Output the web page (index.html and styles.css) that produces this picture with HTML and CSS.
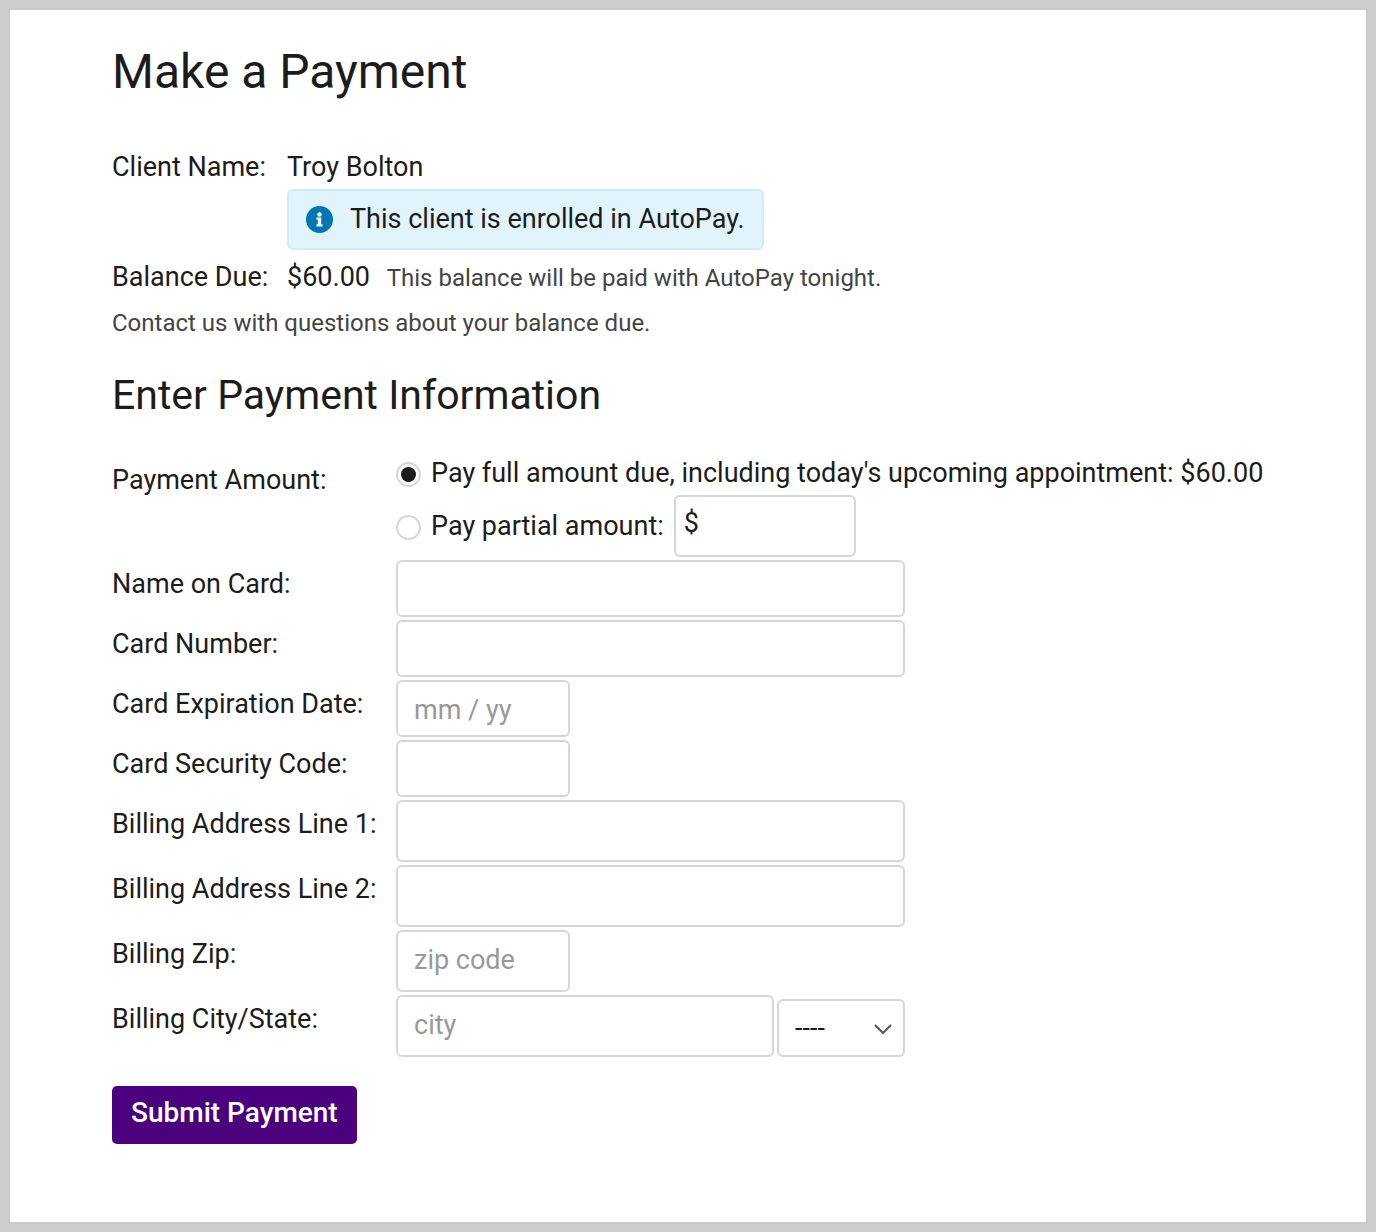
FILE: index.html
```
<!DOCTYPE html>
<html lang="en">
<head>
    <meta charset="utf-8">
    <title>Make a Payment</title>
    <link rel="stylesheet" href="styles.css">
</head>
<body>
    <main id="container">
        <h1>Make a Payment</h1>

        <dl class="summary">
            <dt>Client Name:</dt>
            <dd>
                Troy Bolton
                <div class="alert">
                    <svg class="info-icon" viewBox="0 0 27 27" aria-hidden="true">
                        <circle cx="13.500" cy="13.500" r="13.500" fill="#0077b3"/>
                        <circle cx="13.500" cy="8.500" r="2.200" fill="#fff"/>
                        <path d="M10.500 11.500h4.700v6.700h1.300v2.300h-6v-2.300h1.300v-4.400h-1.300z" fill="#fff"/>
                    </svg>
                    <span>This client is enrolled in AutoPay.</span>
                </div>
            </dd>
            <dt class="balance">Balance Due:</dt>
            <dd class="balance">$60.00 <span class="note">This balance will be paid with AutoPay tonight.</span></dd>
        </dl>
        <p class="contact">Contact us with questions about your balance due.</p>

        <h2>Enter Payment Information</h2>

        <form id="payment-form">
            <div class="row amount">
                <span class="label" id="amount-label">Payment Amount:</span>
                <div class="options" role="radiogroup" aria-labelledby="amount-label">
                    <div class="option">
                        <input type="radio" name="amount" id="pay-full" checked>
                        <label for="pay-full">Pay full amount due, including today's upcoming appointment: $60.00</label>
                    </div>
                    <div class="option partial">
                        <input type="radio" name="amount" id="pay-partial">
                        <label for="pay-partial">Pay partial amount:</label>
                        <div class="money">
                            <span>$</span>
                            <input type="text" id="partial-amount" aria-label="Partial amount">
                        </div>
                    </div>
                </div>
            </div>
            <div class="row">
                <label for="card-name">Name on Card:</label>
                <input type="text" class="field" id="card-name">
            </div>
            <div class="row">
                <label for="card-number">Card Number:</label>
                <input type="text" class="field" id="card-number">
            </div>
            <div class="row">
                <label for="card-exp">Card Expiration Date:</label>
                <input type="text" class="field short" id="card-exp" placeholder="mm / yy">
            </div>
            <div class="row">
                <label for="card-code">Card Security Code:</label>
                <input type="text" class="field short" id="card-code">
            </div>
            <div class="row billing">
                <label for="address1">Billing Address Line 1:</label>
                <input type="text" class="field" id="address1">
            </div>
            <div class="row billing">
                <label for="address2">Billing Address Line 2:</label>
                <input type="text" class="field" id="address2">
            </div>
            <div class="row billing">
                <label for="zip">Billing Zip:</label>
                <input type="text" class="field short" id="zip" placeholder="zip code">
            </div>
            <div class="row billing">
                <label for="city">Billing City/State:</label>
                <div class="city-state">
                    <input type="text" class="field" id="city" placeholder="city">
                    <div class="select">
                        <select id="state" aria-label="State">
                            <option>----</option>
                        </select>
                        <svg class="chevron" viewBox="0 0 18 10" aria-hidden="true">
                            <path d="M1 1l8 8 8-8" fill="none" stroke="#555" stroke-width="2"/>
                        </svg>
                    </div>
                </div>
            </div>
            <button type="submit">Submit Payment</button>
        </form>
    </main>
</body>
</html>
```

FILE: styles.css
```
* {
    box-sizing: border-box;
}
body {
    margin: 0;
    min-height: 100vh;
    border: 10px solid #ccc;
    background-color: #fff;
    color: #1c1c1c;
    font-family: Roboto, "Liberation Sans", sans-serif;
    font-size: 27px;
    line-height: 48px;
}
#container {
    padding: 34px 80px 70px 102px;
}
h1 {
    margin: 0 0 45px;
    font-size: 48px;
    font-weight: 400;
    line-height: 56px;
}
h2 {
    margin: 30px 0 31px;
    font-size: 41px;
    font-weight: 400;
    line-height: 50px;
}
.summary {
    display: grid;
    grid-template-columns: 175px 1fr;
    margin: 0;
    line-height: 44px;
}
.summary dd {
    margin: 0;
}
.summary .balance {
    line-height: 55px;
}
.alert {
    display: flex;
    align-items: center;
    gap: 17px;
    width: fit-content;
    padding: 6px 17px;
    border: 2px solid #cdeef9;
    border-radius: 6px;
    background-color: #e1f4fc;
    line-height: 45px;
}
.info-icon {
    width: 27px;
    height: 27px;
}
.note {
    margin-left: 10px;
    color: #444;
    font-size: 24px;
}
.contact {
    margin: 0;
    color: #444;
    font-size: 24px;
    line-height: 34px;
}
input,
select,
button {
    margin: 0;
    color: inherit;
    font: inherit;
}
.row {
    display: grid;
    grid-template-columns: 284px 1fr;
    align-items: start;
    margin-bottom: 3px;
}
.amount .label {
    padding-top: 5px;
}
.option {
    display: flex;
    align-items: center;
    gap: 10px;
    line-height: 44px;
}
.option input[type="radio"] {
    appearance: none;
    display: grid;
    flex: none;
    place-items: center;
    width: 25px;
    height: 25px;
    margin-top: 3px;
    border: 2px solid #d6d6d6;
    border-radius: 50%;
    background-color: #fff;
}
.option input[type="radio"]:checked::before {
    content: "";
    width: 15px;
    height: 15px;
    border-radius: 50%;
    background-color: #1c1c1c;
}
.field,
.money,
.select select {
    border: 2px solid #d6d6d6;
    border-radius: 6px;
    background-color: #fff;
}
.money {
    display: flex;
    align-items: center;
    width: 182px;
    height: 62px;
    padding: 0 8px 6px;
}
.money input {
    width: 100%;
    border: 0;
    background: none;
    outline: none;
}
.field {
    width: 100%;
    max-width: 509px;
    height: 57px;
    padding: 2px 16px 0;
}
.billing .field {
    height: 62px;
    padding: 0 16px 2px;
}
.field.short {
    max-width: 174px;
}
.field::placeholder {
    color: #999;
    opacity: 1;
}
.city-state {
    display: flex;
    align-items: flex-end;
    gap: 3px;
    max-width: 509px;
}
.select {
    position: relative;
    flex: none;
}
.select select {
    appearance: none;
    display: block;
    width: 128px;
    height: 58px;
    padding: 0 16px;
}
.chevron {
    position: absolute;
    top: 25px;
    right: 13px;
    width: 18px;
    height: 10px;
    pointer-events: none;
}
button {
    margin-top: 26px;
    padding: 3px 19px 7px;
    border: 0;
    border-radius: 5px;
    background-color: #4b007d;
    color: #fff;
    font-size: 28px;
    font-weight: 500;
    cursor: pointer;
}
```
